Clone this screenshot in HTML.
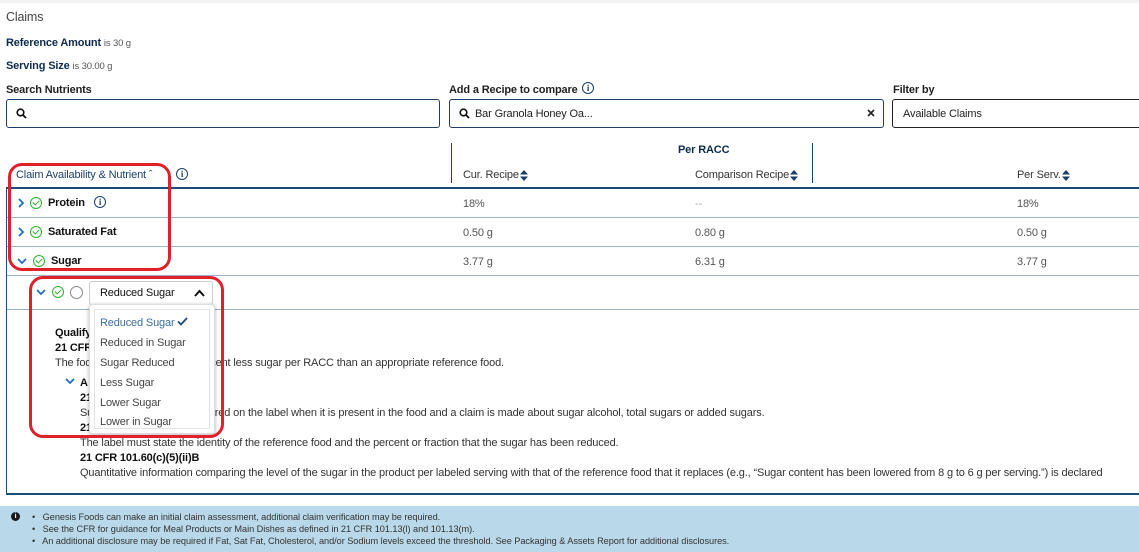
<!DOCTYPE html>
<html><head><meta charset="utf-8"><style>
*{margin:0;padding:0;box-sizing:border-box}
html,body{width:1139px;height:552px;overflow:hidden}
body{background:#fff;font-family:"Liberation Sans",sans-serif;color:#222;font-size:11px;position:relative;letter-spacing:-0.15px}
.a{position:absolute;white-space:nowrap}
.t{margin-top:1px}
.lbl{color:#0d2b4e;font-weight:bold}
.small{font-size:9.5px;color:#555}
.hl{position:absolute;left:6px;right:0;height:1px;background:#9bb3cc}
.inp{position:absolute;border:1px solid #1d3f66;border-radius:3px;height:29px;background:#fff}
.chk{position:absolute;width:12px;height:12px;border:1.5px solid #2bb52b;border-radius:50%}
.chk:after{content:"";position:absolute;left:3px;top:1px;width:3px;height:5px;border:solid #2bb52b;border-width:0 1.5px 1.5px 0;transform:rotate(45deg)}
.info{position:absolute;width:12px;height:12px;border:1.3px solid #1d3f66;border-radius:50%;font-size:9px;line-height:10px;text-align:center;color:#1d3f66;font-weight:bold;font-family:"Liberation Serif",serif}
.red{position:absolute;border:3px solid #e0202a;border-radius:14px}
.b{font-weight:bold;color:#111}
.sort{display:inline-block;vertical-align:middle;margin-left:1px}
</style></head><body>
<svg width="0" height="0" style="position:absolute"><defs>
<symbol id="s" viewBox="0 0 8 11"><path d="M0 4.5L4 0l4 4.5zM0 6.5L4 11l4-4.5z" fill="#1d3f66"/></symbol>
<symbol id="r" viewBox="0 0 8 10"><path d="M2 1l4 4-4 4" fill="none" stroke="#1d6fc4" stroke-width="1.8"/></symbol>
<symbol id="d" viewBox="0 0 10 8"><path d="M1 2l4 4 4-4" fill="none" stroke="#1d6fc4" stroke-width="1.8"/></symbol>
</defs></svg>
<div class="a" style="left:0;top:0;width:1139px;height:3px;background:#f2f2f2"></div>
<div class="a t" style="left:6px;top:9px;font-size:12.5px;color:#444">Claims</div>
<div class="a t" style="left:6px;top:36px"><span class="lbl">Reference Amount</span> <span class="small">is 30 g</span></div>
<div class="a t" style="left:6px;top:59px"><span class="lbl">Serving Size</span> <span class="small">is 30.00 g</span></div>
<div class="a t" style="left:6px;top:83px;font-weight:bold;color:#222">Search Nutrients</div>
<div class="inp" style="left:6px;top:99px;width:434px"></div>
<svg class="a" style="left:16px;top:108px" width="11" height="11" viewBox="0 0 11 11"><circle cx="4.5" cy="4.5" r="3.3" fill="none" stroke="#111" stroke-width="1.6"/><path d="M7 7l3 3" stroke="#111" stroke-width="1.8"/></svg>
<div class="a t" style="left:449px;top:83px;font-weight:bold;color:#222">Add a Recipe to compare</div>
<div class="info" style="left:582px;top:82px">i</div>
<div class="inp" style="left:449px;top:99px;width:435px"></div>
<svg class="a" style="left:459px;top:108px" width="11" height="11" viewBox="0 0 11 11"><circle cx="4.5" cy="4.5" r="3.3" fill="none" stroke="#111" stroke-width="1.6"/><path d="M7 7l3 3" stroke="#111" stroke-width="1.8"/></svg>
<div class="a t" style="left:475px;top:107px">Bar Granola Honey Oa...</div>
<svg class="a" style="left:867px;top:109px" width="8" height="8" viewBox="0 0 8 8"><path d="M1 1l6 6M7 1L1 7" stroke="#222" stroke-width="1.6"/></svg>
<div class="a t" style="left:893px;top:83px;font-weight:bold;color:#222">Filter by</div>
<div class="inp" style="left:892px;top:99px;width:260px;border-color:#222"></div>
<div class="a t" style="left:903px;top:107px">Available Claims</div>

<div class="a" style="left:451px;top:143px;width:1px;height:40px;background:#1d3f66"></div>
<div class="a" style="left:812px;top:143px;width:1px;height:40px;background:#1d3f66"></div>
<div class="a t" style="left:678px;top:143px;font-weight:bold;color:#0d2b4e">Per RACC</div>
<div class="a t" style="left:16px;top:168px;color:#1d3f66">Claim Availability &amp; Nutrient ˆ</div>
<div class="info" style="left:176px;top:168px">i</div>
<div class="a t" style="left:463px;top:168px;color:#333">Cur. Recipe<svg class="sort" width="8" height="11"><use href="#s"/></svg></div>
<div class="a t" style="left:695px;top:168px;color:#333">Comparison Recipe<svg class="sort" width="8" height="11"><use href="#s"/></svg></div>
<div class="a t" style="left:1017px;top:168px;color:#333">Per Serv.<svg class="sort" width="8" height="11"><use href="#s"/></svg></div>
<div class="a" style="left:6px;top:187px;right:0;height:2px;background:#1d4a7a"></div>
<div class="hl" style="top:217px"></div>
<div class="hl" style="top:246px"></div>
<div class="hl" style="top:275px"></div>
<div class="hl" style="top:309px"></div>
<div class="a" style="left:6px;top:187px;width:1px;height:308px;background:#1d4a7a"></div>
<div class="a" style="left:6px;top:493px;right:0;height:2px;background:#1d4a7a"></div>

<svg class="a" style="left:17px;top:198px" width="8" height="10"><use href="#r"/></svg>
<div class="chk" style="left:30px;top:197px"></div>
<div class="a b t" style="left:48px;top:196px">Protein</div>
<div class="info" style="left:94px;top:196px">i</div>
<svg class="a" style="left:17px;top:227px" width="8" height="10"><use href="#r"/></svg>
<div class="chk" style="left:30px;top:226px"></div>
<div class="a b t" style="left:48px;top:225px">Saturated Fat</div>
<svg class="a" style="left:17px;top:257px" width="10" height="8"><use href="#d"/></svg>
<div class="chk" style="left:33px;top:255px"></div>
<div class="a b t" style="left:51px;top:254px">Sugar</div>

<div class="a t" style="left:463px;top:197px;color:#555">18%</div>
<div class="a t" style="left:695px;top:197px;color:#aaa">--</div>
<div class="a t" style="left:1017px;top:197px;color:#555">18%</div>
<div class="a t" style="left:463px;top:226px;color:#555">0.50 g</div>
<div class="a t" style="left:695px;top:226px;color:#555">0.80 g</div>
<div class="a t" style="left:1017px;top:226px;color:#555">0.50 g</div>
<div class="a t" style="left:463px;top:255px;color:#555">3.77 g</div>
<div class="a t" style="left:695px;top:255px;color:#555">6.31 g</div>
<div class="a t" style="left:1017px;top:255px;color:#555">3.77 g</div>

<svg class="a" style="left:36px;top:288px" width="10" height="8"><use href="#d"/></svg>
<div class="chk" style="left:52px;top:286px"></div>
<div class="a" style="left:70px;top:286px;width:13px;height:13px;border:1px solid #888;border-radius:50%"></div>
<div class="a" style="left:89px;top:281px;width:124px;height:24px;border:1px solid #ccc;border-radius:3px;background:#fff"></div>
<div class="a t" style="left:100px;top:286px;color:#111">Reduced Sugar</div>
<svg class="a" style="left:194px;top:289px" width="11" height="8" viewBox="0 0 11 8"><path d="M1 7l4.5-5L10 7" fill="none" stroke="#111" stroke-width="2"/></svg>

<div class="a b t" style="left:55px;top:326px">Qualify</div>
<div class="a b t" style="left:55px;top:341px">21 CFR</div>
<div class="a t" style="left:55px;top:356px;color:#333">The food contains at least 25 percent less sugar per RACC than an appropriate reference food.</div>
<svg class="a" style="left:65px;top:377px" width="10" height="8"><use href="#d"/></svg>
<div class="a b t" style="left:80px;top:376px">A</div>
<div class="a b t" style="left:80px;top:391px">21</div>
<div class="a t" style="left:80px;top:406px;color:#333">Sugar alcohol must be declared on the label when it is present in the food and a claim is made about sugar alcohol, total sugars or added sugars.</div>
<div class="a b t" style="left:80px;top:421px">21</div>
<div class="a t" style="left:80px;top:436px;color:#333">The label must state the identity of the reference food and the percent or fraction that the sugar has been reduced.</div>
<div class="a b t" style="left:80px;top:451px">21 CFR 101.60(c)(5)(ii)B</div>
<div class="a t" style="left:80px;top:466px;color:#333;width:1059px;overflow:hidden">Quantitative information comparing the level of the sugar in the product per labeled serving with that of the reference food that it replaces (e.g., “Sugar content has been lowered from 8 g to 6 g per serving.”) is declared</div>

<div class="a" style="left:89px;top:304px;width:126px;height:130px;background:#fff;border:1px solid #ddd;border-radius:3px;box-shadow:0 1px 4px rgba(0,0,0,.3)"></div>
<div class="a" style="left:94px;top:309px;width:116px;height:120px;border:1px solid #e4e4e4"></div>
<div class="a t" style="left:100px;top:316px;color:#3d6d9e">Reduced Sugar <svg width="11" height="9" viewBox="0 0 11 9"><path d="M1 4.5l3 3L10 1" fill="none" stroke="#1d4a7a" stroke-width="1.8"/></svg></div>
<div class="a t" style="left:100px;top:336px;color:#444">Reduced in Sugar</div>
<div class="a t" style="left:100px;top:356px;color:#444">Sugar Reduced</div>
<div class="a t" style="left:100px;top:376px;color:#444">Less Sugar</div>
<div class="a t" style="left:100px;top:396px;color:#444">Lower Sugar</div>
<div class="a t" style="left:100px;top:415px;color:#444">Lower in Sugar</div>

<div class="red" style="left:8px;top:163px;width:163px;height:108px"></div>
<div class="red" style="left:29px;top:276px;width:195px;height:162px"></div>

<div class="a" style="left:0;top:506px;width:1139px;height:46px;background:#b9d9ea"></div>
<div class="a" style="left:11px;top:512px;width:9px;height:9px;border-radius:50%;background:#1a1a1a;color:#fff;font-size:7px;line-height:9px;text-align:center;font-weight:bold">i</div>
<div class="a" style="left:32px;top:511px;font-size:9.2px;line-height:12px;color:#333;letter-spacing:-0.05px">•&nbsp;&nbsp; Genesis Foods can make an initial claim assessment, additional claim verification may be required.<br>•&nbsp;&nbsp; See the CFR for guidance for Meal Products or Main Dishes as defined in 21 CFR 101.13(l) and 101.13(m).<br>•&nbsp;&nbsp; An additional disclosure may be required if Fat, Sat Fat, Cholesterol, and/or Sodium levels exceed the threshold. See Packaging &amp; Assets Report for additional disclosures.</div>
</body></html>
